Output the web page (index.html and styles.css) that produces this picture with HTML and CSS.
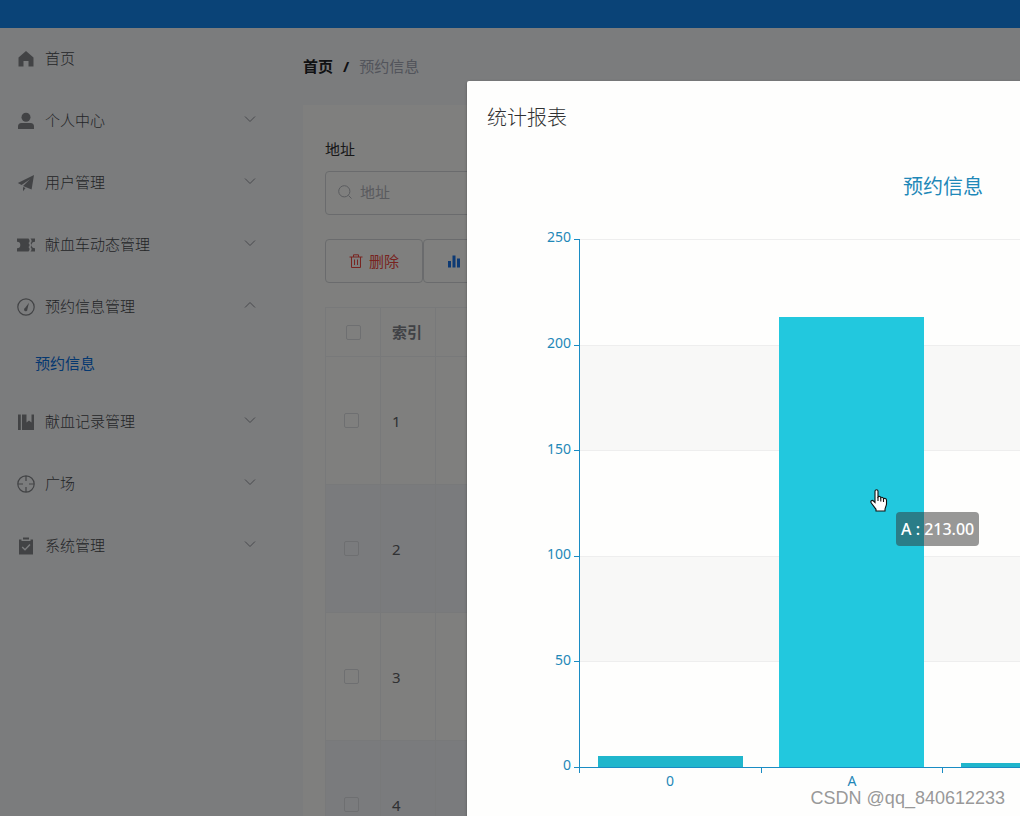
FILE: index.html
```html
<!DOCTYPE html>
<html lang="zh-CN">
<head>
<meta charset="utf-8">
<title>预约信息</title>
<link rel="stylesheet" href="styles.css">
</head>
<body>
<svg class="defs" aria-hidden="true">
  <symbol id="down" viewBox="0 0 12 12"><path d="M1 3.500 6 8.500 11 3.500" fill="none" stroke="currentColor" stroke-width="1"/></symbol>
  <symbol id="up" viewBox="0 0 12 12"><path d="M1 8.500 6 3.500 11 8.500" fill="none" stroke="currentColor" stroke-width="1"/></symbol>
</svg>
<div class="app">
  <header class="topbar"></header>
  <div class="body">
    <nav class="sidebar">
      <ul class="menu">
        <li><a class="item" href="#"><svg class="icon" viewBox="0 0 18 18"><path d="M9 1 16.500 7.500V16.500H11.500V11H6.500V16.500H1.500V7.500Z" fill="currentColor"/></svg><span>首页</span></a></li>
        <li><a class="item" href="#"><svg class="icon" viewBox="0 0 18 18"><circle cx="9" cy="5.300" r="4.500" fill="currentColor"/><path d="M1 17v-2.500a3.500 3.500 0 0 1 3.500-3.500h9a3.500 3.500 0 0 1 3.500 3.500V17Z" fill="currentColor"/></svg><span>个人中心</span><svg class="arrow"><use href="#down"/></svg></a></li>
        <li><a class="item" href="#"><svg class="icon" viewBox="0 0 18 18"><path d="M17 1 .8 9l3.800 2L13 5.200 6 12l8.600 3.500ZM6 13v4.300l2.600-3.200Z" fill="currentColor"/></svg><span>用户管理</span><svg class="arrow"><use href="#down"/></svg></a></li>
        <li><a class="item" href="#"><svg class="icon" viewBox="0 0 18 18"><path d="M0 2.500h11.500l1 1.500v2l-1 1 1 1.500v1.500l-1 1 1 1.500v1.500l-1 1.500H0v-3.200a3.300 3.300 0 0 0 0-6.600ZM13.500 2.500H18v3.200a3.300 3.300 0 0 0 0 6.600v3.200h-4.500l1-1.500v-1.500l-1-1.500 1-1v-1.500l-1-1.500 1-1V4Z" fill="currentColor"/></svg><span>献血车动态管理</span><svg class="arrow"><use href="#down"/></svg></a></li>
        <li><a class="item" href="#"><svg class="icon" viewBox="0 0 18 18"><circle cx="9" cy="9" r="8.200" fill="none" stroke="currentColor" stroke-width="1.200"/><path d="M12 4.800 10.400 11.200a1.700 1.700 0 1 1-2.400-1.200Z" fill="currentColor"/></svg><span>预约信息管理</span><svg class="arrow"><use href="#up"/></svg></a></li>
        <li><a class="subitem" href="#">预约信息</a></li>
        <li><a class="item" href="#"><svg class="icon" viewBox="0 0 18 18"><path d="M1 1.500h2.800v15.500H1ZM5 1.500h4.500v8L12 7.500l2.500 2v-8H17V17H5Z" fill="currentColor"/></svg><span>献血记录管理</span><svg class="arrow"><use href="#down"/></svg></a></li>
        <li><a class="item" href="#"><svg class="icon" viewBox="0 0 18 18"><path d="M9 .8a8.200 8.200 0 1 0 0 16.400A8.200 8.200 0 0 0 9 .8ZM9 1v5M9 12v5M1 9h5M12 9h5" fill="none" stroke="currentColor" stroke-width="1.200"/></svg><span>广场</span><svg class="arrow"><use href="#down"/></svg></a></li>
        <li><a class="item" href="#"><svg class="icon" viewBox="0 0 18 18"><path d="M6 .500h6v2H6ZM2 2.500h2.500V4h9V2.500H16V17.500H2Z" fill="currentColor"/><path d="M5.200 10 8 12.700 13 7.500" fill="none" stroke="#f6f8fb" stroke-width="1.400"/></svg><span>系统管理</span><svg class="arrow"><use href="#down"/></svg></a></li>
      </ul>
    </nav>
    <main class="main">
      <div class="crumbs"><a class="home" href="#">首页</a><span class="slash">/</span><span class="here">预约信息</span></div>
      <section class="card">
        <label class="label" for="address">地址</label>
        <div class="search">
          <svg class="glass" viewBox="0 0 14 14"><circle cx="6.300" cy="6.300" r="5.600" fill="none" stroke="currentColor"/><path d="m10.500 10.500 3 3" stroke="currentColor"/></svg>
          <input id="address" type="text" placeholder="地址">
        </div>
        <div class="actions">
          <button class="btn danger" type="button"><svg class="btn-icon" viewBox="0 0 14 14"><path d="M.500 3h13M2.500 3v10.500h9V3M4.500 3V.800h5V3M5.500 5.500v5.500M8.500 5.500v5.500" fill="none" stroke="currentColor"/></svg>删除</button>
          <button class="btn primary" type="button"><svg class="btn-icon" viewBox="0 0 14 14"><path d="M1 7h3v6.500H1ZM5.500 1.500h3v12h-3ZM10 4.500h3v9h-3Z" fill="currentColor"/></svg>统计报表</button>
        </div>
        <table class="grid">
          <thead><tr><th class="pick"><input type="checkbox" aria-label="全选"></th><th class="num">索引</th><th></th></tr></thead>
          <tbody>
            <tr><td class="pick"><input type="checkbox" aria-label="1"></td><td>1</td><td></td></tr>
            <tr><td class="pick"><input type="checkbox" aria-label="2"></td><td>2</td><td></td></tr>
            <tr><td class="pick"><input type="checkbox" aria-label="3"></td><td>3</td><td></td></tr>
            <tr><td class="pick"><input type="checkbox" aria-label="4"></td><td>4</td><td></td></tr>
          </tbody>
        </table>
      </section>
    </main>
  </div>
</div>
<div class="mask">
  <section class="dialog" role="dialog" aria-labelledby="dialog-title">
    <h2 class="dialog-title" id="dialog-title">统计报表</h2>
    <div class="chart">
      <svg class="plot" width="912" height="670" viewBox="487 146 912 670">
        <g class="bands"><rect x="580" y="345" width="726" height="105"/><rect x="580" y="556" width="726" height="105"/></g>
        <path class="lines" d="M580 239.500h726M580 345.500h726M580 450.500h726M580 556.500h726M580 661.500h726"/>
        <g class="bars">
          <rect x="598" y="756" width="145" height="11"/>
          <rect class="active" x="779" y="317" width="145" height="450"/>
          <rect x="961" y="763" width="145" height="4"/>
        </g>
        <path class="axis" d="M579.500 239V773M574 767.500H1306M574 239.500h6M574 345.500h6M574 450.500h6M574 556.500h6M574 661.500h6M761.500 767v6M942.500 767v6M1124.500 767v6"/>
        <text class="chart-title" x="943" y="194">预约信息</text>
        <g class="ylabels"><text x="571" y="242">250</text><text x="571" y="348">200</text><text x="571" y="454">150</text><text x="571" y="559">100</text><text x="571" y="665">50</text><text x="571" y="770">0</text></g>
        <g class="xlabels"><text x="670" y="786">0</text><text x="852" y="786">A</text></g>
      </svg>
      <div class="tooltip">A : 213.00</div>
      <svg class="cursor" viewBox="0 0 18 23"><path d="M5 2.200C5 .300 8 .300 8 2.200V8c.800-1 2.800-.600 2.800.700.900-.800 2.700-.300 2.700 1 .900-.700 3-.300 3 1.300V15c0 2-1.500 3.500-1.500 5.500V22H6v-1.700L1.300 14c-1.300-1.800.800-3.500 2.200-2L5 13.500Z" fill="#fff" stroke="#111" stroke-width="1.100"/><path d="M8 8v4M10.800 9v3.500M13.500 10v3" stroke="#111" stroke-width="1.100"/></svg>
    </div>
  </section>
</div>
<div class="watermark">CSDN @qq_840612233</div>
</body>
</html>
```

FILE: styles.css
```css
* { box-sizing: border-box; }
body {
  margin: 0;
  overflow: hidden;
  font: 15px/22px "Noto Sans", "Noto Sans CJK SC", sans-serif;
  color: #303133;
}
.defs { position: absolute; width: 0; height: 0; }
a { color: inherit; text-decoration: none; }
.app { display: flex; flex-direction: column; height: 100vh; overflow: hidden; background: #f6f8fb; }
.topbar { flex: 0 0 28px; background: #1486ee; }
.body { display: flex; flex: 1; min-height: 0; }

.sidebar { flex: 0 0 288px; font-weight: 300; color: #484a4e; }
.menu { margin: 0; padding: 0; list-style: none; }
.item { display: flex; align-items: center; height: 62px; padding: 0 32px 0 17px; gap: 10px; }
.item span { padding-bottom: 2px; }
.icon { width: 18px; height: 18px; color: #85878b; }
.arrow { width: 12px; height: 12px; margin: 0 0 4px auto; color: #909399; }
.subitem { display: flex; align-items: center; height: 53px; padding: 0 0 4px 35px; color: #0a70e0; font-weight: 400; }

.main { flex: 1; min-width: 0; padding: 27px 0 0 15px; }
.crumbs { display: flex; gap: 10px; margin-bottom: 28px; color: #a4a8b6; }
.home, .slash { font-weight: 700; color: #202226; }
.card { padding: 33px 22px; background: #fffffc; }
.label { display: block; margin-bottom: 11px; }
.search { display: flex; align-items: center; gap: 8px; height: 44px; padding: 0 12px 2px; border: 1px solid #d4d6da; border-radius: 4px; }
.glass { width: 14px; height: 14px; color: #b4b7be; }
.search input { flex: 1; min-width: 0; padding: 0; border: 0; outline: 0; background: none; font: inherit; }
.search input::placeholder { color: #b4b6bc; }
.actions { display: flex; margin: 24px 0; }
.btn { display: flex; align-items: center; gap: 6px; height: 44px; padding: 0 23px; border: 1px solid #d4d6da; border-radius: 4px; background: none; font: inherit; white-space: nowrap; }
.btn-icon { width: 14px; height: 14px; }
.danger { color: #f04840; }
.primary { color: #1a74e8; }

.grid { width: 100%; table-layout: fixed; border-collapse: collapse; color: #606266; }
.grid th, .grid td { height: 128px; padding: 0 11px; border: 1px solid #f0f2f5; text-align: left; }
.grid th { height: 49px; color: #82858c; font-weight: 700; }
.grid .pick, .grid .num { width: 55px; }
.grid td.pick { padding-left: 18px; }
.grid th.pick { padding-left: 20px; }
.grid th.num { white-space: nowrap; }
.grid tbody tr:nth-child(even) { background: #f4f6fb; }
.grid input { display: block; width: 15px; height: 15px; margin: 0; appearance: none; border: 1px solid #dcdee2; border-radius: 2px; }

.mask { position: absolute; inset: 0; overflow: hidden; background: rgba(0, 0, 0, 0.5); }
.dialog { position: absolute; top: 81px; left: 467px; padding: 26px 20px; border-radius: 2px; background: #fefefd; box-shadow: 0 1px 3px rgba(0, 0, 0, 0.3); }
.dialog-title { margin: 0 0 17px; font-size: 20px; line-height: 22px; font-weight: 300; }
.chart { position: relative; }
.plot { display: block; }
.bands { fill: #f8f8f7; }
.lines { stroke: #eeeeee; }
.bars { fill: #20b6cc; }
.bars .active { fill: #22c8de; }
.axis { fill: none; stroke: #1a8cc4; }
.plot text { fill: #1f88b8; font-size: 14px; }
.plot .chart-title { font-size: 20px; text-anchor: middle; }
.ylabels { text-anchor: end; }
.xlabels { text-anchor: middle; }
.tooltip { position: absolute; top: 366px; left: 409px; padding: 6px 5px; border-radius: 4px; background: rgba(50, 50, 50, 0.5); color: #fff; font-weight: 500; font-size: 16px; white-space: nowrap; }
.cursor { position: absolute; top: 343px; left: 383px; width: 18px; height: 23px; }
.watermark { position: absolute; right: 15px; bottom: 7px; font: 18px/22px "Liberation Sans", sans-serif; color: #999; text-shadow: 1px 1px 0 #fff; }
```
